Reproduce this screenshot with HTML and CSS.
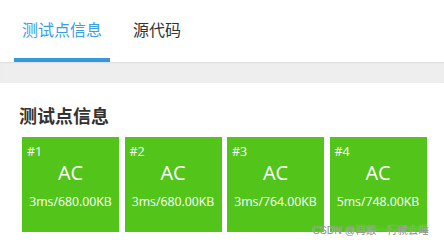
FILE: index.html
```html
<!DOCTYPE html>
<html>
<head>
<meta charset="utf-8">
<link rel="stylesheet" href="styles.css">
</head>
<body>
<div class="tabs">
  <div class="tab active">测试点信息</div>
  <div class="tab">源代码</div>
</div>
<div class="band"></div>
<div class="content">
  <h2 class="title">测试点信息</h2>
  <div class="cards">
    <div class="card"><div class="num">#1</div><div class="res">AC</div><div class="stat">3ms/680.00KB</div></div>
    <div class="card"><div class="num">#2</div><div class="res">AC</div><div class="stat">3ms/680.00KB</div></div>
    <div class="card"><div class="num">#3</div><div class="res">AC</div><div class="stat">3ms/764.00KB</div></div>
    <div class="card"><div class="num">#4</div><div class="res">AC</div><div class="stat">5ms/748.00KB</div></div>
  </div>
</div>
<div class="watermark">CSDN @再敲一行就去睡</div>
</body>
</html>
```
FILE: styles.css
```css
html, body {
  margin: 0;
  padding: 0;
  background: #fff;
  font-family: "Open Sans", "Noto Sans CJK SC", sans-serif;
  width: 444px;
  height: 245px;
  overflow: hidden;
  position: relative;
}
.tabs {
  display: flex;
  height: 62px;
  padding-left: 14px;
  background: #fff;
}
.tab {
  font-family: "Noto Sans CJK SC", sans-serif;
  font-size: 16px;
  line-height: 58px;
  height: 58px;
  padding: 0 8px;
  color: #333;
  border-bottom: 4px solid transparent;
}
.tab + .tab {
  margin-left: 15px;
}
.tab.active {
  color: #3a9ee4;
  border-bottom-color: #3498db;
  width: 80px;
  text-align: center;
}
.band {
  height: 21px;
  background: #eeeeee;
  box-shadow: inset 0 2px 2px -1px #dcdcdc;
}
.content {
  padding-left: 19px;
}
.title {
  margin: 20px 0 0 0;
  font-family: "Noto Sans CJK SC", sans-serif;
  font-size: 18px;
  font-weight: bold;
  line-height: 24px;
  color: #333;
}
.cards {
  display: flex;
  gap: 5.5px;
  padding-left: 3px;
  margin-top: 10px;
}
.card {
  width: 97px;
  height: 95px;
  box-sizing: border-box;
  background: #52c41a;
  color: #fff;
  padding: 7px 5px 0 5px;
  display: flex;
  flex-direction: column;
}
.num {
  font-size: 12.5px;
  line-height: 16px;
}
.res {
  font-size: 20px;
  line-height: 24px;
  margin-top: 1px;
  text-align: center;
}
.stat {
  font-size: 12.3px;
  line-height: 16px;
  margin-top: 9px;
  text-align: center;
  white-space: nowrap;
}
.watermark {
  position: absolute;
  right: 15px;
  top: 224px;
  font-family: "Liberation Sans", "Noto Sans CJK SC", sans-serif;
  font-size: 10.5px;
  line-height: 13px;
  color: #8c8c8c;
  text-shadow: 0 0 1px rgba(255,255,255,0.7);
}
```
